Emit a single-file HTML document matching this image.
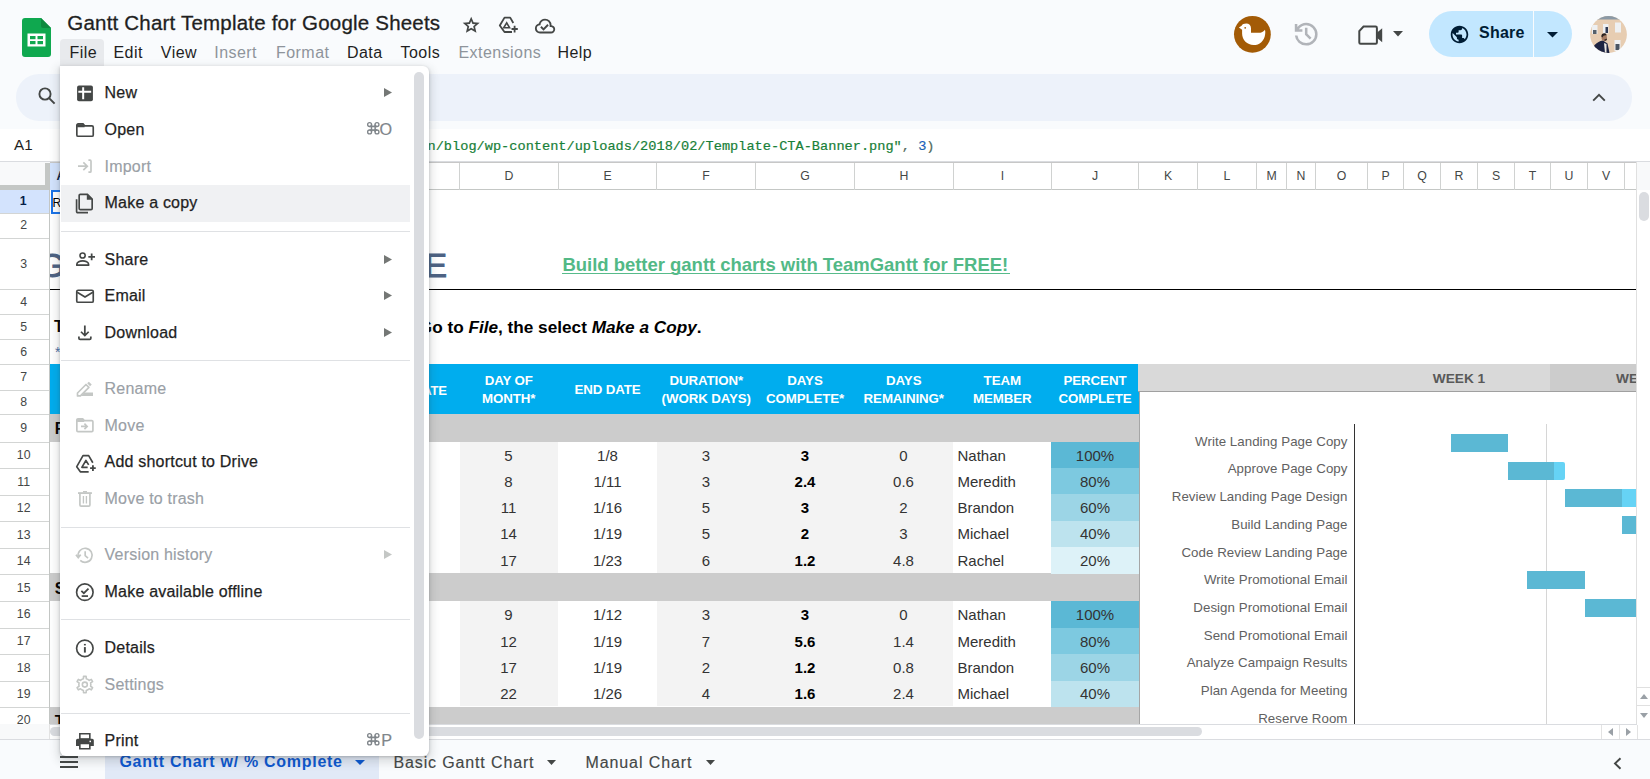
<!DOCTYPE html><html><head><meta charset="utf-8"><style>
*{box-sizing:border-box}
html,body{margin:0;padding:0}
body{width:1650px;height:779px;overflow:hidden;position:relative;background:#f9fbfd;font-family:'Liberation Sans',sans-serif;}
.a{position:absolute}
.t{white-space:nowrap}
svg{position:absolute;overflow:visible}
</style></head><body>
<svg style="left:22px;top:18px" width="29" height="39" viewBox="0 0 29 39">
<path d="M3 0H19L29 10V36a3 3 0 0 1-3 3H3a3 3 0 0 1-3-3V3a3 3 0 0 1 3-3z" fill="#0fa84f"/>
<path d="M19 0L29 10H21a2 2 0 0 1-2-2z" fill="#0c8a3e"/>
<rect x="5.5" y="15.5" width="18" height="13" fill="#fff"/>
<rect x="8" y="18" width="5.5" height="3.2" fill="#0fa84f"/><rect x="15.5" y="18" width="5.5" height="3.2" fill="#0fa84f"/>
<rect x="8" y="23" width="5.5" height="3.2" fill="#0fa84f"/><rect x="15.5" y="23" width="5.5" height="3.2" fill="#0fa84f"/>
</svg>
<div class="a t" style="left:67.3px;top:13.45px;font-size:20.5px;line-height:20.5px;color:#1f1f1f;letter-spacing:0.2px;-webkit-text-stroke:0.3px #1f1f1f;">Gantt Chart Template for Google Sheets</div>
<svg style="left:461.3px;top:14.7px" width="20.4" height="20.4" viewBox="0 -960 960 960"><path d="m354-287 126-76 126 77-33-144 111-96-146-13-58-136-58 135-146 13 111 97-33 143ZM233-120l65-281L80-590l288-25 112-265 112 265 288 25-218 189 65 281-247-149-247 149Z" fill="#444746"/></svg>
<svg style="left:498px;top:16px" width="22" height="19" viewBox="0 0 22 19"><path d="M14 16H6.5L1.8 9.5L6.5 1.6H12.2L15.3 7" fill="none" stroke="#444746" stroke-width="1.8" stroke-linejoin="round"/><path d="M5.7 11.8H11.6L8.7 6.8Z" fill="none" stroke="#444746" stroke-width="1.6"/><path d="M13.5 13H19.8M16.6 9.8V16.6" stroke="#444746" stroke-width="1.8"/></svg>
<svg style="left:533.8px;top:14.5px" width="22.1" height="22.1" viewBox="0 -960 960 960"><path d="m414-280 226-226-58-58-169 169-84-84-57 57 142 142ZM260-160q-91 0-155.5-63T40-377q0-78 47-139t123-78q25-92 100-149t170-57q117 0 198.5 81.5T760-520q69 8 114.5 59.5T920-340q0 75-52.5 127.5T740-160H260Zm0-80h480q42 0 71-29t29-71q0-42-29-71t-71-29h-60v-80q0-83-58.5-141.5T480-720q-83 0-141.5 58.5T280-520h-20q-58 0-99 41t-41 99q0 58 41 99t99 41Z" fill="#444746"/></svg>
<div class="a" style="left:60px;top:39px;width:44px;height:28px;background:#e8eaed;border-radius:4px 4px 0 0;"></div>
<div class="a t" style="left:69.5px;top:44.96px;font-size:16px;line-height:16px;color:#1f1f1f;letter-spacing:0.45px;">File</div>
<div class="a t" style="left:113.5px;top:44.96px;font-size:16px;line-height:16px;color:#1f1f1f;letter-spacing:0.45px;">Edit</div>
<div class="a t" style="left:160.8px;top:44.96px;font-size:16px;line-height:16px;color:#1f1f1f;letter-spacing:0.45px;">View</div>
<div class="a t" style="left:214.3px;top:44.96px;font-size:16px;line-height:16px;color:#8e949b;letter-spacing:0.45px;">Insert</div>
<div class="a t" style="left:276px;top:44.96px;font-size:16px;line-height:16px;color:#8e949b;letter-spacing:0.45px;">Format</div>
<div class="a t" style="left:347px;top:44.96px;font-size:16px;line-height:16px;color:#1f1f1f;letter-spacing:0.45px;">Data</div>
<div class="a t" style="left:400.5px;top:44.96px;font-size:16px;line-height:16px;color:#1f1f1f;letter-spacing:0.45px;">Tools</div>
<div class="a t" style="left:458.5px;top:44.96px;font-size:16px;line-height:16px;color:#8e949b;letter-spacing:0.45px;">Extensions</div>
<div class="a t" style="left:557.5px;top:44.96px;font-size:16px;line-height:16px;color:#1f1f1f;letter-spacing:0.45px;">Help</div>
<svg style="left:1234px;top:16px" width="37" height="37" viewBox="0 0 37 37"><circle cx="18.4" cy="18.3" r="18.4" fill="#a35b06"/>
<path d="M8.1 13.7L4.9 11.6L7.6 9.8C8.2 8.2 10 7.5 12.3 7.5C15 7.5 17 9.5 17 12.2V16.7H26.4C28.5 16.2 30 15 30.9 13.7C31.5 15.5 31.3 17 31.1 18.4C30.5 24.5 25.5 29.1 19.6 29.1C13.2 29.1 8.1 24 8.1 17.6Z" fill="#fff"/><circle cx="11.2" cy="11.8" r=".9" fill="#a35b06"/></svg>
<svg style="left:1290.9px;top:18.9px" width="30.4" height="30.4" viewBox="0 -960 960 960"><path d="M480-120q-138 0-240.5-91.5T122-440h82q14 104 92.5 172T480-200q117 0 198.5-81.5T760-480q0-117-81.5-198.5T480-760q-69 0-129 32t-101 88h110v80H120v-240h80v94q51-64 124.5-99T480-840q75 0 140.5 28.5t114 77q48.5 48.5 77 114T840-480q0 75-28.5 140.5t-77 114q-48.5 48.5-114 77T480-120Zm112-192L440-464v-216h80v184l128 128-56 56Z" fill="#b1b4b9"/></svg>
<svg style="left:1358px;top:25px" width="26" height="20" viewBox="0 0 26 20"><path d="M5.5 1.6H17.6a1.3 1.3 0 0 1 1.3 1.3V17.4a1.3 1.3 0 0 1-1.3 1.3H2.6a1.3 1.3 0 0 1-1.3-1.3V6.2z" fill="none" stroke="#444746" stroke-width="2"/><path d="M18.6 8L24.2 3.2V17.2L18.6 12.4z" fill="#444746"/></svg>
<svg style="left:1393px;top:31px" width="10" height="6" viewBox="0 0 10 6"><path d="M0 0H10L5 5.5z" fill="#444746"/></svg>
<div class="a" style="left:1429px;top:11px;width:143px;height:46px;background:#c2e7ff;border-radius:23px;"></div>
<div class="a" style="left:1533px;top:11px;width:1.2px;height:46px;background:#f9fbfd;"></div>
<svg style="left:1449px;top:24px" width="21" height="21" viewBox="0 0 24 24"><path d="M12 2C6.48 2 2 6.48 2 12s4.48 10 10 10 10-4.48 10-10S17.52 2 12 2zm-1 17.93c-3.95-.49-7-3.85-7-7.93 0-.62.08-1.21.21-1.79L9 15v1c0 1.1.9 2 2 2v1.93zm6.9-2.54c-.26-.81-1-1.39-1.9-1.39h-1v-3c0-.55-.45-1-1-1H8v-2h2c.55 0 1-.45 1-1V7h2c1.1 0 2-.9 2-2v-.41c2.93 1.19 5 4.06 5 7.41 0 2.08-.8 3.97-2.1 5.39z" fill="#001d35"/></svg>
<div class="a t" style="left:1479px;top:25.46px;font-size:16px;line-height:16px;color:#001d35;letter-spacing:0.25px;font-weight:bold;">Share</div>
<svg style="left:1547px;top:32px" width="11" height="6" viewBox="0 0 11 6"><path d="M0 0H11L5.5 5.5z" fill="#001d35"/></svg>
<svg style="left:1590px;top:15.5px" width="37" height="37" viewBox="0 0 37 37"><defs><clipPath id="cav"><circle cx="18.5" cy="18.5" r="18.4"/></clipPath></defs><g clip-path="url(#cav)">
<rect width="37" height="37" fill="#e7cdb2"/><rect x="0" y="0" width="37" height="3.5" fill="#8c9aa6"/>
<rect x="2" y="9" width="5.5" height="9" fill="#eef0f2"/><rect x="3" y="14" width="3.5" height="4" fill="#55606a"/>
<rect x="13" y="8" width="5.5" height="9.5" fill="#eef0f2"/><rect x="15.5" y="11" width="2.5" height="6" fill="#2e3a55"/>
<rect x="25" y="6.5" width="6" height="10" fill="#eef0f2"/>
<rect x="24.5" y="24" width="6" height="11" fill="#eef0f2"/><rect x="25.5" y="28" width="4" height="6" fill="#4a5563"/>
<path d="M2.5 37L3.5 30.5C5 28 8 26 10.5 25L13 24.5L17.5 27.5L19.5 37Z" fill="#1d2442"/>
<path d="M14 27L16.5 28V37H15z" fill="#e9e6e2"/>
<ellipse cx="14.2" cy="21.6" rx="2.7" ry="3.4" fill="#a57b62"/><path d="M11.3 20.5C11.3 18 13 17 14.5 17.2C16.2 17.4 16.8 18.6 16.5 19.5C15 19 13 19.5 12.5 21.5Z" fill="#2a2220"/><path d="M14 24.3C15 25.2 16.5 24.8 17 23.5L16.8 22.6L14.5 23.4Z" fill="#3b2f2a"/></g></svg>
<div class="a" style="left:16px;top:74px;width:1616px;height:46.5px;background:#edf2fa;border-radius:23px;"></div>
<svg style="left:37px;top:86px" width="20" height="20" viewBox="0 0 20 20"><circle cx="8" cy="8" r="5.6" fill="none" stroke="#444746" stroke-width="1.9"/><path d="M12.1 12.1L17.6 17.6" stroke="#444746" stroke-width="2"/></svg>
<svg style="left:1592px;top:93px" width="14" height="9" viewBox="0 0 14 9"><path d="M1.2 7.6L7 1.8L12.8 7.6" fill="none" stroke="#444746" stroke-width="1.9"/></svg>
<div class="a" style="left:0px;top:129px;width:1650px;height:33px;background:#ffffff;"></div>
<div class="a" style="left:0px;top:161px;width:1650px;height:1px;background:#dadce0;"></div>
<div class="a t" style="left:14px;top:137.13px;font-size:15.2px;line-height:15.2px;color:#1f1f1f;">A1</div>
<div class="a t" style="left:427.5px;top:139.58px;font-family:'Liberation Mono',monospace;font-size:13.6px;line-height:13.6px;color:#188038;letter-spacing:0.02px;-webkit-text-stroke:0.2px #188038">n/blog/wp-content/uploads/2018/02/Template-CTA-Banner.png"<span style="color:#5f6368">, </span><span style="color:#1a56db">3</span><span style="color:#5f6368">)</span></div>
<div class="a" style="left:0px;top:162px;width:1650px;height:577px;background:#ffffff;"></div>
<div class="a" style="left:0px;top:162px;width:1650px;height:1px;background:#c7c7c7;"></div>
<div class="a" style="left:0px;top:189px;width:1637px;height:1.3px;background:#c4c7c5;"></div>
<div class="a" style="left:459px;top:163px;width:1px;height:27px;background:#d0d2d1;"></div>
<div class="a" style="left:558px;top:163px;width:1px;height:27px;background:#d0d2d1;"></div>
<div class="a" style="left:656px;top:163px;width:1px;height:27px;background:#d0d2d1;"></div>
<div class="a" style="left:755px;top:163px;width:1px;height:27px;background:#d0d2d1;"></div>
<div class="a" style="left:854px;top:163px;width:1px;height:27px;background:#d0d2d1;"></div>
<div class="a" style="left:953px;top:163px;width:1px;height:27px;background:#d0d2d1;"></div>
<div class="a" style="left:1051px;top:163px;width:1px;height:27px;background:#d0d2d1;"></div>
<div class="a" style="left:1138px;top:163px;width:1px;height:27px;background:#d0d2d1;"></div>
<div class="a" style="left:1197px;top:163px;width:1px;height:27px;background:#d0d2d1;"></div>
<div class="a" style="left:1256px;top:163px;width:1px;height:27px;background:#d0d2d1;"></div>
<div class="a" style="left:1286px;top:163px;width:1px;height:27px;background:#d0d2d1;"></div>
<div class="a" style="left:1315px;top:163px;width:1px;height:27px;background:#d0d2d1;"></div>
<div class="a" style="left:1367px;top:163px;width:1px;height:27px;background:#d0d2d1;"></div>
<div class="a" style="left:1403px;top:163px;width:1px;height:27px;background:#d0d2d1;"></div>
<div class="a" style="left:1440px;top:163px;width:1px;height:27px;background:#d0d2d1;"></div>
<div class="a" style="left:1477px;top:163px;width:1px;height:27px;background:#d0d2d1;"></div>
<div class="a" style="left:1514px;top:163px;width:1px;height:27px;background:#d0d2d1;"></div>
<div class="a" style="left:1550px;top:163px;width:1px;height:27px;background:#d0d2d1;"></div>
<div class="a" style="left:1587px;top:163px;width:1px;height:27px;background:#d0d2d1;"></div>
<div class="a" style="left:1624px;top:163px;width:1px;height:27px;background:#d0d2d1;"></div>
<div class="a t" style="left:209.0px;width:600px;text-align:center;top:170.09px;font-size:12.3px;line-height:12.3px;color:#444746;">D</div>
<div class="a t" style="left:307.5px;width:600px;text-align:center;top:170.09px;font-size:12.3px;line-height:12.3px;color:#444746;">E</div>
<div class="a t" style="left:406.0px;width:600px;text-align:center;top:170.09px;font-size:12.3px;line-height:12.3px;color:#444746;">F</div>
<div class="a t" style="left:505.0px;width:600px;text-align:center;top:170.09px;font-size:12.3px;line-height:12.3px;color:#444746;">G</div>
<div class="a t" style="left:604.0px;width:600px;text-align:center;top:170.09px;font-size:12.3px;line-height:12.3px;color:#444746;">H</div>
<div class="a t" style="left:702.5px;width:600px;text-align:center;top:170.09px;font-size:12.3px;line-height:12.3px;color:#444746;">I</div>
<div class="a t" style="left:795.0px;width:600px;text-align:center;top:170.09px;font-size:12.3px;line-height:12.3px;color:#444746;">J</div>
<div class="a t" style="left:868.0px;width:600px;text-align:center;top:170.09px;font-size:12.3px;line-height:12.3px;color:#444746;">K</div>
<div class="a t" style="left:927.0px;width:600px;text-align:center;top:170.09px;font-size:12.3px;line-height:12.3px;color:#444746;">L</div>
<div class="a t" style="left:971.5px;width:600px;text-align:center;top:170.09px;font-size:12.3px;line-height:12.3px;color:#444746;">M</div>
<div class="a t" style="left:1001.0px;width:600px;text-align:center;top:170.09px;font-size:12.3px;line-height:12.3px;color:#444746;">N</div>
<div class="a t" style="left:1041.5px;width:600px;text-align:center;top:170.09px;font-size:12.3px;line-height:12.3px;color:#444746;">O</div>
<div class="a t" style="left:1085.5px;width:600px;text-align:center;top:170.09px;font-size:12.3px;line-height:12.3px;color:#444746;">P</div>
<div class="a t" style="left:1122.0px;width:600px;text-align:center;top:170.09px;font-size:12.3px;line-height:12.3px;color:#444746;">Q</div>
<div class="a t" style="left:1159.0px;width:600px;text-align:center;top:170.09px;font-size:12.3px;line-height:12.3px;color:#444746;">R</div>
<div class="a t" style="left:1196.0px;width:600px;text-align:center;top:170.09px;font-size:12.3px;line-height:12.3px;color:#444746;">S</div>
<div class="a t" style="left:1232.5px;width:600px;text-align:center;top:170.09px;font-size:12.3px;line-height:12.3px;color:#444746;">T</div>
<div class="a t" style="left:1269.0px;width:600px;text-align:center;top:170.09px;font-size:12.3px;line-height:12.3px;color:#444746;">U</div>
<div class="a t" style="left:1306.0px;width:600px;text-align:center;top:170.09px;font-size:12.3px;line-height:12.3px;color:#444746;">V</div>
<div class="a t" style="left:1343.0px;width:600px;text-align:center;top:170.09px;font-size:12.3px;line-height:12.3px;color:#444746;">W</div>
<div class="a" style="left:0px;top:162px;width:50px;height:28px;background:#f8f9fa;"></div>
<div class="a" style="left:45px;top:163px;width:5px;height:27px;background:#c4c7c5;"></div>
<div class="a" style="left:0px;top:185px;width:50px;height:5px;background:#c4c7c5;"></div>
<div class="a" style="left:50px;top:163px;width:12px;height:26.5px;background:#d3e3fd;"></div>
<div class="a t" style="left:56.5px;top:170.09px;font-size:12.3px;line-height:12.3px;color:#041e49;font-weight:bold;">A</div>
<div class="a" style="left:0px;top:190px;width:49.5px;height:534px;background:#ffffff;"></div>
<div class="a" style="left:0px;top:190px;width:50px;height:23px;background:#d3e3fd;"></div>
<div class="a" style="left:0px;top:212.5px;width:49px;height:1px;background:#d3d5d4;"></div>
<div class="a" style="left:0px;top:237.5px;width:49px;height:1px;background:#d3d5d4;"></div>
<div class="a" style="left:0px;top:289.0px;width:49px;height:1px;background:#d3d5d4;"></div>
<div class="a" style="left:0px;top:313.5px;width:49px;height:1px;background:#d3d5d4;"></div>
<div class="a" style="left:0px;top:339.0px;width:49px;height:1px;background:#d3d5d4;"></div>
<div class="a" style="left:0px;top:363.5px;width:49px;height:1px;background:#d3d5d4;"></div>
<div class="a" style="left:0px;top:389.5px;width:49px;height:1px;background:#d3d5d4;"></div>
<div class="a" style="left:0px;top:414.0px;width:49px;height:1px;background:#d3d5d4;"></div>
<div class="a" style="left:0px;top:441.5px;width:49px;height:1px;background:#d3d5d4;"></div>
<div class="a" style="left:0px;top:468.0px;width:49px;height:1px;background:#d3d5d4;"></div>
<div class="a" style="left:0px;top:494.5px;width:49px;height:1px;background:#d3d5d4;"></div>
<div class="a" style="left:0px;top:521.0px;width:49px;height:1px;background:#d3d5d4;"></div>
<div class="a" style="left:0px;top:547.5px;width:49px;height:1px;background:#d3d5d4;"></div>
<div class="a" style="left:0px;top:574.0px;width:49px;height:1px;background:#d3d5d4;"></div>
<div class="a" style="left:0px;top:600.5px;width:49px;height:1px;background:#d3d5d4;"></div>
<div class="a" style="left:0px;top:627.5px;width:49px;height:1px;background:#d3d5d4;"></div>
<div class="a" style="left:0px;top:654.0px;width:49px;height:1px;background:#d3d5d4;"></div>
<div class="a" style="left:0px;top:680.5px;width:49px;height:1px;background:#d3d5d4;"></div>
<div class="a" style="left:0px;top:706.5px;width:49px;height:1px;background:#d3d5d4;"></div>
<div class="a" style="left:48.5px;top:190px;width:1.5px;height:534px;background:#c4c7c5;"></div>
<div class="a t" style="left:-276.8px;width:600px;text-align:center;top:195.49px;font-size:12.3px;line-height:12.3px;color:#041e49;font-weight:bold;">1</div>
<div class="a t" style="left:-276.3px;width:600px;text-align:center;top:219.49px;font-size:12.3px;line-height:12.3px;color:#444746;">2</div>
<div class="a t" style="left:-276.3px;width:600px;text-align:center;top:257.74px;font-size:12.3px;line-height:12.3px;color:#444746;">3</div>
<div class="a t" style="left:-276.3px;width:600px;text-align:center;top:295.74px;font-size:12.3px;line-height:12.3px;color:#444746;">4</div>
<div class="a t" style="left:-276.3px;width:600px;text-align:center;top:320.74px;font-size:12.3px;line-height:12.3px;color:#444746;">5</div>
<div class="a t" style="left:-276.3px;width:600px;text-align:center;top:345.74px;font-size:12.3px;line-height:12.3px;color:#444746;">6</div>
<div class="a t" style="left:-276.3px;width:600px;text-align:center;top:370.99px;font-size:12.3px;line-height:12.3px;color:#444746;">7</div>
<div class="a t" style="left:-276.3px;width:600px;text-align:center;top:396.24px;font-size:12.3px;line-height:12.3px;color:#444746;">8</div>
<div class="a t" style="left:-276.3px;width:600px;text-align:center;top:422.24px;font-size:12.3px;line-height:12.3px;color:#444746;">9</div>
<div class="a t" style="left:-276.3px;width:600px;text-align:center;top:449.24px;font-size:12.3px;line-height:12.3px;color:#444746;">10</div>
<div class="a t" style="left:-276.3px;width:600px;text-align:center;top:475.74px;font-size:12.3px;line-height:12.3px;color:#444746;">11</div>
<div class="a t" style="left:-276.3px;width:600px;text-align:center;top:502.24px;font-size:12.3px;line-height:12.3px;color:#444746;">12</div>
<div class="a t" style="left:-276.3px;width:600px;text-align:center;top:528.74px;font-size:12.3px;line-height:12.3px;color:#444746;">13</div>
<div class="a t" style="left:-276.3px;width:600px;text-align:center;top:555.24px;font-size:12.3px;line-height:12.3px;color:#444746;">14</div>
<div class="a t" style="left:-276.3px;width:600px;text-align:center;top:581.74px;font-size:12.3px;line-height:12.3px;color:#444746;">15</div>
<div class="a t" style="left:-276.3px;width:600px;text-align:center;top:608.49px;font-size:12.3px;line-height:12.3px;color:#444746;">16</div>
<div class="a t" style="left:-276.3px;width:600px;text-align:center;top:635.24px;font-size:12.3px;line-height:12.3px;color:#444746;">17</div>
<div class="a t" style="left:-276.3px;width:600px;text-align:center;top:661.74px;font-size:12.3px;line-height:12.3px;color:#444746;">18</div>
<div class="a t" style="left:-276.3px;width:600px;text-align:center;top:687.99px;font-size:12.3px;line-height:12.3px;color:#444746;">19</div>
<div class="a t" style="left:-276.3px;width:600px;text-align:center;top:713.99px;font-size:12.3px;line-height:12.3px;color:#444746;">20</div>
<div class="a" style="left:50.5px;top:190.3px;width:30px;height:23.5px;border:2px solid #1a73e8"></div>
<div class="a t" style="left:52.5px;top:197.04px;font-size:12px;line-height:12px;color:#000;">R</div>
<div class="a" style="left:50px;top:238px;width:500px;height:51px;overflow:hidden">
<div class="a t" style="right:103.5px;top:11.04px;font-size:33.5px;line-height:33.5px;color:#4d6283;letter-spacing:-0.6px;-webkit-text-stroke:0.9px #4d6283">GANTT CHART TEMPLATE</div>
</div>
<div class="a t" style="left:562.4px;top:255.94px;font-size:18.5px;line-height:18.5px;color:#52b986;letter-spacing:-0.02px;font-weight:bold;">Build better gantt charts with TeamGantt for FREE!</div>
<div class="a" style="left:562px;top:272.8px;width:448px;height:1.4px;background:#57bb8a;"></div>
<div class="a" style="left:50px;top:288.7px;width:1600px;height:1.6px;background:#000;"></div>
<div class="a t" style="left:54px;top:318.86px;font-size:16px;line-height:16px;color:#000;font-weight:bold;">T</div>
<div class="a" style="left:61px;top:310px;width:700px;height:30px;overflow:hidden">
<div class="a t" style="right:59.5px;top:9.24px;font-size:17.2px;line-height:17.2px;font-weight:bold;color:#000;text-align:right">To make a copy of this Gantt chart template: Go to <i>File</i>, the select <i>Make a Copy</i>.</div>
</div>
<div class="a t" style="left:55px;top:345.15px;font-size:14px;line-height:14px;color:#4a6fa5;">*</div>
<div class="a" style="left:50px;top:364px;width:1089px;height:50px;background:#00adee;"></div>
<div class="a t" style="right:1203.2px;text-align:right;top:383.51px;font-size:13.1px;line-height:13.1px;color:#fff;letter-spacing:-0.25px;font-weight:bold;">START DATE</div>
<div class="a t" style="left:459.5px;width:98.5px;text-align:center;top:372.44px;font-size:13.3px;line-height:18px;font-weight:bold;color:#fff;letter-spacing:-0.1px">DAY OF<br>MONTH*</div>
<div class="a t" style="left:558px;width:99px;text-align:center;top:381.14px;font-size:13.3px;line-height:18px;font-weight:bold;color:#fff;letter-spacing:-0.1px">END DATE</div>
<div class="a t" style="left:657px;width:98.5px;text-align:center;top:372.44px;font-size:13.3px;line-height:18px;font-weight:bold;color:#fff;letter-spacing:-0.1px">DURATION*<br>(WORK DAYS)</div>
<div class="a t" style="left:755.5px;width:99.0px;text-align:center;top:372.44px;font-size:13.3px;line-height:18px;font-weight:bold;color:#fff;letter-spacing:-0.1px">DAYS<br>COMPLETE*</div>
<div class="a t" style="left:854.5px;width:98.5px;text-align:center;top:372.44px;font-size:13.3px;line-height:18px;font-weight:bold;color:#fff;letter-spacing:-0.1px">DAYS<br>REMAINING*</div>
<div class="a t" style="left:953px;width:98.5px;text-align:center;top:372.44px;font-size:13.3px;line-height:18px;font-weight:bold;color:#fff;letter-spacing:-0.1px">TEAM<br>MEMBER</div>
<div class="a t" style="left:1051.5px;width:87.0px;text-align:center;top:372.44px;font-size:13.3px;line-height:18px;font-weight:bold;color:#fff;letter-spacing:-0.1px">PERCENT<br>COMPLETE</div>
<div class="a" style="left:50px;top:414px;width:1089px;height:28px;background:#cccccc;"></div>
<div class="a" style="left:50px;top:573.4px;width:1089px;height:28.0px;background:#cccccc;"></div>
<div class="a" style="left:50px;top:706.5px;width:1089px;height:17.5px;background:#cccccc;"></div>
<div class="a t" style="left:54.8px;top:421.36px;font-size:16px;line-height:16px;color:#000;font-weight:bold;">FIRST PHASE</div>
<div class="a t" style="left:54.8px;top:580.96px;font-size:16px;line-height:16px;color:#000;font-weight:bold;">SECOND PHASE</div>
<div class="a t" style="left:54.8px;top:713.96px;font-size:16px;line-height:16px;color:#000;font-weight:bold;">THIRD PHASE</div>
<div class="a" style="left:50px;top:442px;width:1089px;height:131.39999999999998px;background:#ffffff;"></div>
<div class="a" style="left:459.5px;top:442px;width:98.5px;height:131.39999999999998px;background:#f3f3f3;"></div>
<div class="a" style="left:657px;top:442px;width:296px;height:131.39999999999998px;background:#f3f3f3;"></div>
<div class="a" style="left:1051.2px;top:442px;width:87.8px;height:26.6px;background:#5bb8d5;"></div>
<div class="a t" style="left:208.5px;width:600px;text-align:center;top:447.50px;font-size:15px;line-height:15px;color:#333;">5</div>
<div class="a t" style="left:307.5px;width:600px;text-align:center;top:447.50px;font-size:15px;line-height:15px;color:#333;">1/8</div>
<div class="a t" style="left:406px;width:600px;text-align:center;top:447.50px;font-size:15px;line-height:15px;color:#333;">3</div>
<div class="a t" style="left:505px;width:600px;text-align:center;top:447.50px;font-size:15px;line-height:15px;color:#000;font-weight:bold;">3</div>
<div class="a t" style="left:603.5px;width:600px;text-align:center;top:447.50px;font-size:15px;line-height:15px;color:#333;">0</div>
<div class="a t" style="left:957.5px;top:447.50px;font-size:15px;line-height:15px;color:#333;">Nathan</div>
<div class="a t" style="left:795px;width:600px;text-align:center;top:447.50px;font-size:15px;line-height:15px;color:#333;">100%</div>
<div class="a" style="left:1051.2px;top:468px;width:87.8px;height:26.900000000000013px;background:#7dc9e0;"></div>
<div class="a t" style="left:208.5px;width:600px;text-align:center;top:473.65px;font-size:15px;line-height:15px;color:#333;">8</div>
<div class="a t" style="left:307.5px;width:600px;text-align:center;top:473.65px;font-size:15px;line-height:15px;color:#333;">1/11</div>
<div class="a t" style="left:406px;width:600px;text-align:center;top:473.65px;font-size:15px;line-height:15px;color:#333;">3</div>
<div class="a t" style="left:505px;width:600px;text-align:center;top:473.65px;font-size:15px;line-height:15px;color:#000;font-weight:bold;">2.4</div>
<div class="a t" style="left:603.5px;width:600px;text-align:center;top:473.65px;font-size:15px;line-height:15px;color:#333;">0.6</div>
<div class="a t" style="left:957.5px;top:473.65px;font-size:15px;line-height:15px;color:#333;">Meredith</div>
<div class="a t" style="left:795px;width:600px;text-align:center;top:473.65px;font-size:15px;line-height:15px;color:#333;">80%</div>
<div class="a" style="left:1051.2px;top:494.3px;width:87.8px;height:26.79999999999999px;background:#9cd5e6;"></div>
<div class="a t" style="left:208.5px;width:600px;text-align:center;top:499.90px;font-size:15px;line-height:15px;color:#333;">11</div>
<div class="a t" style="left:307.5px;width:600px;text-align:center;top:499.90px;font-size:15px;line-height:15px;color:#333;">1/16</div>
<div class="a t" style="left:406px;width:600px;text-align:center;top:499.90px;font-size:15px;line-height:15px;color:#333;">5</div>
<div class="a t" style="left:505px;width:600px;text-align:center;top:499.90px;font-size:15px;line-height:15px;color:#000;font-weight:bold;">3</div>
<div class="a t" style="left:603.5px;width:600px;text-align:center;top:499.90px;font-size:15px;line-height:15px;color:#333;">2</div>
<div class="a t" style="left:957.5px;top:499.90px;font-size:15px;line-height:15px;color:#333;">Brandon</div>
<div class="a t" style="left:795px;width:600px;text-align:center;top:499.90px;font-size:15px;line-height:15px;color:#333;">60%</div>
<div class="a" style="left:1051.2px;top:520.5px;width:87.8px;height:26.899999999999956px;background:#bde3ee;"></div>
<div class="a t" style="left:208.5px;width:600px;text-align:center;top:526.15px;font-size:15px;line-height:15px;color:#333;">14</div>
<div class="a t" style="left:307.5px;width:600px;text-align:center;top:526.15px;font-size:15px;line-height:15px;color:#333;">1/19</div>
<div class="a t" style="left:406px;width:600px;text-align:center;top:526.15px;font-size:15px;line-height:15px;color:#333;">5</div>
<div class="a t" style="left:505px;width:600px;text-align:center;top:526.15px;font-size:15px;line-height:15px;color:#000;font-weight:bold;">2</div>
<div class="a t" style="left:603.5px;width:600px;text-align:center;top:526.15px;font-size:15px;line-height:15px;color:#333;">3</div>
<div class="a t" style="left:957.5px;top:526.15px;font-size:15px;line-height:15px;color:#333;">Michael</div>
<div class="a t" style="left:795px;width:600px;text-align:center;top:526.15px;font-size:15px;line-height:15px;color:#333;">40%</div>
<div class="a" style="left:1051.2px;top:546.8px;width:87.8px;height:27.200000000000024px;background:#ddf2f8;"></div>
<div class="a t" style="left:208.5px;width:600px;text-align:center;top:552.60px;font-size:15px;line-height:15px;color:#333;">17</div>
<div class="a t" style="left:307.5px;width:600px;text-align:center;top:552.60px;font-size:15px;line-height:15px;color:#333;">1/23</div>
<div class="a t" style="left:406px;width:600px;text-align:center;top:552.60px;font-size:15px;line-height:15px;color:#333;">6</div>
<div class="a t" style="left:505px;width:600px;text-align:center;top:552.60px;font-size:15px;line-height:15px;color:#000;font-weight:bold;">1.2</div>
<div class="a t" style="left:603.5px;width:600px;text-align:center;top:552.60px;font-size:15px;line-height:15px;color:#333;">4.8</div>
<div class="a t" style="left:957.5px;top:552.60px;font-size:15px;line-height:15px;color:#333;">Rachel</div>
<div class="a t" style="left:795px;width:600px;text-align:center;top:552.60px;font-size:15px;line-height:15px;color:#333;">20%</div>
<div class="a" style="left:50px;top:601.4px;width:1089px;height:105.10000000000002px;background:#ffffff;"></div>
<div class="a" style="left:459.5px;top:601.4px;width:98.5px;height:105.10000000000002px;background:#f3f3f3;"></div>
<div class="a" style="left:657px;top:601.4px;width:296px;height:105.10000000000002px;background:#f3f3f3;"></div>
<div class="a" style="left:1051.2px;top:601.4px;width:87.8px;height:27.200000000000024px;background:#5bb8d5;"></div>
<div class="a t" style="left:208.5px;width:600px;text-align:center;top:607.20px;font-size:15px;line-height:15px;color:#333;">9</div>
<div class="a t" style="left:307.5px;width:600px;text-align:center;top:607.20px;font-size:15px;line-height:15px;color:#333;">1/12</div>
<div class="a t" style="left:406px;width:600px;text-align:center;top:607.20px;font-size:15px;line-height:15px;color:#333;">3</div>
<div class="a t" style="left:505px;width:600px;text-align:center;top:607.20px;font-size:15px;line-height:15px;color:#000;font-weight:bold;">3</div>
<div class="a t" style="left:603.5px;width:600px;text-align:center;top:607.20px;font-size:15px;line-height:15px;color:#333;">0</div>
<div class="a t" style="left:957.5px;top:607.20px;font-size:15px;line-height:15px;color:#333;">Nathan</div>
<div class="a t" style="left:795px;width:600px;text-align:center;top:607.20px;font-size:15px;line-height:15px;color:#333;">100%</div>
<div class="a" style="left:1051.2px;top:628px;width:87.8px;height:26.6px;background:#7dc9e0;"></div>
<div class="a t" style="left:208.5px;width:600px;text-align:center;top:633.50px;font-size:15px;line-height:15px;color:#333;">12</div>
<div class="a t" style="left:307.5px;width:600px;text-align:center;top:633.50px;font-size:15px;line-height:15px;color:#333;">1/19</div>
<div class="a t" style="left:406px;width:600px;text-align:center;top:633.50px;font-size:15px;line-height:15px;color:#333;">7</div>
<div class="a t" style="left:505px;width:600px;text-align:center;top:633.50px;font-size:15px;line-height:15px;color:#000;font-weight:bold;">5.6</div>
<div class="a t" style="left:603.5px;width:600px;text-align:center;top:633.50px;font-size:15px;line-height:15px;color:#333;">1.4</div>
<div class="a t" style="left:957.5px;top:633.50px;font-size:15px;line-height:15px;color:#333;">Meredith</div>
<div class="a t" style="left:795px;width:600px;text-align:center;top:633.50px;font-size:15px;line-height:15px;color:#333;">80%</div>
<div class="a" style="left:1051.2px;top:654px;width:87.8px;height:27.1px;background:#9cd5e6;"></div>
<div class="a t" style="left:208.5px;width:600px;text-align:center;top:659.75px;font-size:15px;line-height:15px;color:#333;">17</div>
<div class="a t" style="left:307.5px;width:600px;text-align:center;top:659.75px;font-size:15px;line-height:15px;color:#333;">1/19</div>
<div class="a t" style="left:406px;width:600px;text-align:center;top:659.75px;font-size:15px;line-height:15px;color:#333;">2</div>
<div class="a t" style="left:505px;width:600px;text-align:center;top:659.75px;font-size:15px;line-height:15px;color:#000;font-weight:bold;">1.2</div>
<div class="a t" style="left:603.5px;width:600px;text-align:center;top:659.75px;font-size:15px;line-height:15px;color:#333;">0.8</div>
<div class="a t" style="left:957.5px;top:659.75px;font-size:15px;line-height:15px;color:#333;">Brandon</div>
<div class="a t" style="left:795px;width:600px;text-align:center;top:659.75px;font-size:15px;line-height:15px;color:#333;">60%</div>
<div class="a" style="left:1051.2px;top:680.5px;width:87.8px;height:26.6px;background:#bde3ee;"></div>
<div class="a t" style="left:208.5px;width:600px;text-align:center;top:686.00px;font-size:15px;line-height:15px;color:#333;">22</div>
<div class="a t" style="left:307.5px;width:600px;text-align:center;top:686.00px;font-size:15px;line-height:15px;color:#333;">1/26</div>
<div class="a t" style="left:406px;width:600px;text-align:center;top:686.00px;font-size:15px;line-height:15px;color:#333;">4</div>
<div class="a t" style="left:505px;width:600px;text-align:center;top:686.00px;font-size:15px;line-height:15px;color:#000;font-weight:bold;">1.6</div>
<div class="a t" style="left:603.5px;width:600px;text-align:center;top:686.00px;font-size:15px;line-height:15px;color:#333;">2.4</div>
<div class="a t" style="left:957.5px;top:686.00px;font-size:15px;line-height:15px;color:#333;">Michael</div>
<div class="a t" style="left:795px;width:600px;text-align:center;top:686.00px;font-size:15px;line-height:15px;color:#333;">40%</div>
<div class="a" style="left:1138.8px;top:391px;width:1.4px;height:333px;background:#a6a6a6;"></div>
<div class="a" style="left:1138.3px;top:364px;width:412px;height:27px;background:#d9d9d9;"></div>
<div class="a" style="left:1550px;top:364px;width:90px;height:27px;background:#cccccc;"></div>
<div class="a" style="left:1138.3px;top:390.6px;width:500px;height:1.3px;background:#a0a0a0;"></div>
<div class="a t" style="left:1159px;width:600px;text-align:center;top:372.40px;font-size:13.7px;line-height:13.7px;color:#595959;font-weight:bold;">WEEK 1</div>
<div class="a t" style="left:1616px;top:372.40px;font-size:13.7px;line-height:13.7px;color:#595959;font-weight:bold;">WEEK 2</div>
<div class="a t" style="right:302.5px;text-align:right;top:434.74px;font-size:13.3px;line-height:13.3px;color:#616161;letter-spacing:0.05px;">Write Landing Page Copy</div>
<div class="a t" style="right:302.5px;text-align:right;top:462.44px;font-size:13.3px;line-height:13.3px;color:#616161;letter-spacing:0.05px;">Approve Page Copy</div>
<div class="a t" style="right:302.5px;text-align:right;top:490.14px;font-size:13.3px;line-height:13.3px;color:#616161;letter-spacing:0.05px;">Review Landing Page Design</div>
<div class="a t" style="right:302.5px;text-align:right;top:517.84px;font-size:13.3px;line-height:13.3px;color:#616161;letter-spacing:0.05px;">Build Landing Page</div>
<div class="a t" style="right:302.5px;text-align:right;top:545.54px;font-size:13.3px;line-height:13.3px;color:#616161;letter-spacing:0.05px;">Code Review Landing Page</div>
<div class="a t" style="right:302.5px;text-align:right;top:573.24px;font-size:13.3px;line-height:13.3px;color:#616161;letter-spacing:0.05px;">Write Promotional Email</div>
<div class="a t" style="right:302.5px;text-align:right;top:600.94px;font-size:13.3px;line-height:13.3px;color:#616161;letter-spacing:0.05px;">Design Promotional Email</div>
<div class="a t" style="right:302.5px;text-align:right;top:628.64px;font-size:13.3px;line-height:13.3px;color:#616161;letter-spacing:0.05px;">Send Promotional Email</div>
<div class="a t" style="right:302.5px;text-align:right;top:656.34px;font-size:13.3px;line-height:13.3px;color:#616161;letter-spacing:0.05px;">Analyze Campaign Results</div>
<div class="a t" style="right:302.5px;text-align:right;top:684.04px;font-size:13.3px;line-height:13.3px;color:#616161;letter-spacing:0.05px;">Plan Agenda for Meeting</div>
<div class="a t" style="right:302.5px;text-align:right;top:711.74px;font-size:13.3px;line-height:13.3px;color:#616161;letter-spacing:0.05px;">Reserve Room</div>
<div class="a" style="left:1353.7px;top:423.7px;width:1.4px;height:301px;background:#333333;"></div>
<div class="a" style="left:1545.5px;top:423.7px;width:1.2px;height:301px;background:#d6d6d6;"></div>
<div class="a" style="left:1450.5px;top:433.8px;width:57.09999999999991px;height:18px;background:#5bb8d4;"></div>
<div class="a" style="left:1553.9px;top:461.5px;width:11.099999999999909px;height:18px;background:#66d3f5;border-radius:0 2px 2px 0;"></div>
<div class="a" style="left:1507.6px;top:461.5px;width:46.30000000000018px;height:18px;background:#5bb8d4;"></div>
<div class="a" style="left:1622.3px;top:489px;width:17.700000000000045px;height:18px;background:#66d3f5;border-radius:0 2px 2px 0;"></div>
<div class="a" style="left:1565px;top:489px;width:57.299999999999955px;height:18px;background:#5bb8d4;"></div>
<div class="a" style="left:1622.3px;top:516.4px;width:17.700000000000045px;height:18px;background:#5bb8d4;"></div>
<div class="a" style="left:1527px;top:571.4px;width:57.5px;height:18px;background:#5bb8d4;"></div>
<div class="a" style="left:1584.5px;top:598.8px;width:55.5px;height:18px;background:#5bb8d4;"></div>
<div class="a" style="left:1636.5px;top:162px;width:13.5px;height:577px;background:#ffffff;"></div>
<div class="a" style="left:1636.5px;top:162px;width:13.5px;height:28px;background:#f8f9fa;"></div>
<div class="a" style="left:1636px;top:162px;width:1px;height:577px;background:#e0e0e0;"></div>
<div class="a" style="left:1638.8px;top:192px;width:10px;height:29px;background:#dadce0;border-radius:5px;"></div>
<div class="a" style="left:1637px;top:687px;width:13px;height:1px;background:#e0e0e0;"></div>
<div class="a" style="left:1637px;top:705px;width:13px;height:1px;background:#e0e0e0;"></div>
<svg style="left:1640px;top:694px" width="8" height="5" viewBox="0 0 8 5"><path d="M0 5H8L4 0z" fill="#9aa0a6"/></svg>
<svg style="left:1640px;top:713px" width="8" height="5" viewBox="0 0 8 5"><path d="M0 0H8L4 5z" fill="#9aa0a6"/></svg>
<div class="a" style="left:0px;top:724px;width:1650px;height:15px;background:#ffffff;"></div>
<div class="a" style="left:0px;top:724px;width:1637px;height:1px;background:#dadce0;"></div>
<div class="a" style="left:0px;top:724px;width:49px;height:15px;background:#f8f9fa;"></div>
<div class="a" style="left:48.5px;top:724px;width:1.5px;height:15px;background:#e3e3e3;"></div>
<div class="a" style="left:50px;top:726.5px;width:1152px;height:9.5px;background:#dadce0;border-radius:5px;"></div>
<div class="a" style="left:1601px;top:725px;width:1px;height:14px;background:#e3e3e3;"></div>
<div class="a" style="left:1619.4px;top:725px;width:1px;height:14px;background:#e3e3e3;"></div>
<div class="a" style="left:1637px;top:725px;width:1px;height:14px;background:#e3e3e3;"></div>
<svg style="left:1608px;top:728px" width="5" height="8" viewBox="0 0 5 8"><path d="M5 0V8L0 4z" fill="#9aa0a6"/></svg>
<svg style="left:1626px;top:728px" width="5" height="8" viewBox="0 0 5 8"><path d="M0 0V8L5 4z" fill="#9aa0a6"/></svg>
<div class="a" style="left:0px;top:738.5px;width:1650px;height:1.2px;background:#dadce0;"></div>
<div class="a" style="left:0px;top:739.5px;width:1650px;height:40px;background:#f9fbfd;"></div>
<svg style="left:60px;top:756px" width="18" height="12" viewBox="0 0 18 12"><path d="M0 1H18M0 6H18M0 11H18" stroke="#444746" stroke-width="1.9"/></svg>
<div class="a" style="left:105px;top:740px;width:274px;height:39px;background:#e1e9f7;"></div>
<div class="a t" style="left:119.4px;top:753.96px;font-size:16px;line-height:16px;color:#0b57d0;letter-spacing:0.72px;font-weight:bold;">Gantt Chart w/ % Complete</div>
<svg style="left:355px;top:759.5px" width="10" height="5" viewBox="0 0 10 5"><path d="M0 0H10L5 5z" fill="#0b57d0"/></svg>
<div class="a t" style="left:393.5px;top:754.76px;font-size:16px;line-height:16px;color:#444746;letter-spacing:0.86px;-webkit-text-stroke:0.15px #444746;">Basic Gantt Chart</div>
<svg style="left:547px;top:759.5px" width="9" height="5" viewBox="0 0 9 5"><path d="M0 0H9L4.5 5z" fill="#444746"/></svg>
<div class="a t" style="left:585.5px;top:754.76px;font-size:16px;line-height:16px;color:#444746;letter-spacing:0.9px;-webkit-text-stroke:0.15px #444746;">Manual Chart</div>
<svg style="left:706px;top:759.5px" width="9" height="5" viewBox="0 0 9 5"><path d="M0 0H9L4.5 5z" fill="#444746"/></svg>
<svg style="left:1612px;top:757px" width="10" height="13" viewBox="0 0 10 13"><path d="M8.5 1.2L3 6.5L8.5 11.8" fill="none" stroke="#444746" stroke-width="1.9"/></svg>
<div class="a" style="left:60px;top:66px;width:369px;height:689.5px;background:#fff;border-radius:0 6px 6px 6px;box-shadow:0 4px 8px 3px rgba(60,64,67,.15),0 1px 3px rgba(60,64,67,.3)"></div>
<div class="a" style="left:61px;top:185px;width:349px;height:36.5px;background:#f0f1f3;"></div>
<div class="a" style="left:61px;top:230.5px;width:349px;height:1.3px;background:#dfe1e4;"></div>
<div class="a" style="left:61px;top:359.5px;width:349px;height:1.3px;background:#dfe1e4;"></div>
<div class="a" style="left:61px;top:526.5px;width:349px;height:1.3px;background:#dfe1e4;"></div>
<div class="a" style="left:61px;top:619.0px;width:349px;height:1.3px;background:#dfe1e4;"></div>
<div class="a" style="left:61px;top:712.5px;width:349px;height:1.3px;background:#dfe1e4;"></div>
<div class="a" style="left:414px;top:72px;width:9.5px;height:666.5px;background:#dadce0;border-radius:5px;"></div>
<div class="a t" style="left:104.6px;top:85.16px;font-size:16px;line-height:16px;color:#1f1f1f;letter-spacing:0.2px;-webkit-text-stroke:0.25px #1f1f1f;">New</div>
<svg style="left:384px;top:88px" width="8" height="9" viewBox="0 0 8 9"><path d="M0 0L8 4.5L0 9z" fill="#747775"/></svg>
<div class="a t" style="left:104.6px;top:122.16px;font-size:16px;line-height:16px;color:#1f1f1f;letter-spacing:0.2px;-webkit-text-stroke:0.25px #1f1f1f;">Open</div>
<svg style="left:367px;top:122.4px" width="12.6" height="12.6" viewBox="0 0 12.6 12.6"><g fill="none" stroke="#80868b" stroke-width="1.35"><circle cx="2.6" cy="2.6" r="1.95"/><circle cx="10" cy="2.6" r="1.95"/><circle cx="2.6" cy="10" r="1.95"/><circle cx="10" cy="10" r="1.95"/><path d="M4.55 2.6V10M8.05 2.6V10M2.6 4.55H10M2.6 8.05H10"/></g><rect x="4.6" y="4.6" width="3.4" height="3.4" fill="#fff"/><path d="M4.55 4.55H8.05V8.05H4.55Z" fill="none" stroke="#80868b" stroke-width="1.35"/></svg>
<div class="a t" style="right:1258px;text-align:right;top:121.49px;font-size:16.2px;line-height:16.2px;color:#80868b;-webkit-text-stroke:0.2px #80868b;">O</div>
<div class="a t" style="left:104.6px;top:158.66px;font-size:16px;line-height:16px;color:#9aa0a6;letter-spacing:0.2px;-webkit-text-stroke:0.15px #9aa0a6;">Import</div>
<div class="a t" style="left:104.6px;top:195.16px;font-size:16px;line-height:16px;color:#1f1f1f;letter-spacing:0.2px;-webkit-text-stroke:0.25px #1f1f1f;">Make a copy</div>
<div class="a t" style="left:104.6px;top:251.66px;font-size:16px;line-height:16px;color:#1f1f1f;letter-spacing:0.2px;-webkit-text-stroke:0.25px #1f1f1f;">Share</div>
<svg style="left:384px;top:254.5px" width="8" height="9" viewBox="0 0 8 9"><path d="M0 0L8 4.5L0 9z" fill="#747775"/></svg>
<div class="a t" style="left:104.6px;top:288.16px;font-size:16px;line-height:16px;color:#1f1f1f;letter-spacing:0.2px;-webkit-text-stroke:0.25px #1f1f1f;">Email</div>
<svg style="left:384px;top:291px" width="8" height="9" viewBox="0 0 8 9"><path d="M0 0L8 4.5L0 9z" fill="#747775"/></svg>
<div class="a t" style="left:104.6px;top:325.16px;font-size:16px;line-height:16px;color:#1f1f1f;letter-spacing:0.2px;-webkit-text-stroke:0.25px #1f1f1f;">Download</div>
<svg style="left:384px;top:328px" width="8" height="9" viewBox="0 0 8 9"><path d="M0 0L8 4.5L0 9z" fill="#747775"/></svg>
<div class="a t" style="left:104.6px;top:381.46px;font-size:16px;line-height:16px;color:#9aa0a6;letter-spacing:0.2px;-webkit-text-stroke:0.15px #9aa0a6;">Rename</div>
<div class="a t" style="left:104.6px;top:417.66px;font-size:16px;line-height:16px;color:#9aa0a6;letter-spacing:0.2px;-webkit-text-stroke:0.15px #9aa0a6;">Move</div>
<div class="a t" style="left:104.6px;top:454.46px;font-size:16px;line-height:16px;color:#1f1f1f;letter-spacing:0.2px;-webkit-text-stroke:0.25px #1f1f1f;">Add shortcut to Drive</div>
<div class="a t" style="left:104.6px;top:490.66px;font-size:16px;line-height:16px;color:#9aa0a6;letter-spacing:0.2px;-webkit-text-stroke:0.15px #9aa0a6;">Move to trash</div>
<div class="a t" style="left:104.6px;top:547.26px;font-size:16px;line-height:16px;color:#9aa0a6;letter-spacing:0.2px;-webkit-text-stroke:0.15px #9aa0a6;">Version history</div>
<svg style="left:384px;top:550.1px" width="8" height="9" viewBox="0 0 8 9"><path d="M0 0L8 4.5L0 9z" fill="#c4c7c5"/></svg>
<div class="a t" style="left:104.6px;top:584.16px;font-size:16px;line-height:16px;color:#1f1f1f;letter-spacing:0.2px;-webkit-text-stroke:0.25px #1f1f1f;">Make available offline</div>
<div class="a t" style="left:104.6px;top:640.36px;font-size:16px;line-height:16px;color:#1f1f1f;letter-spacing:0.2px;-webkit-text-stroke:0.25px #1f1f1f;">Details</div>
<div class="a t" style="left:104.6px;top:676.76px;font-size:16px;line-height:16px;color:#9aa0a6;letter-spacing:0.2px;-webkit-text-stroke:0.15px #9aa0a6;">Settings</div>
<div class="a t" style="left:104.6px;top:733.16px;font-size:16px;line-height:16px;color:#1f1f1f;letter-spacing:0.2px;-webkit-text-stroke:0.25px #1f1f1f;">Print</div>
<svg style="left:367px;top:733.4px" width="12.6" height="12.6" viewBox="0 0 12.6 12.6"><g fill="none" stroke="#80868b" stroke-width="1.35"><circle cx="2.6" cy="2.6" r="1.95"/><circle cx="10" cy="2.6" r="1.95"/><circle cx="2.6" cy="10" r="1.95"/><circle cx="10" cy="10" r="1.95"/><path d="M4.55 2.6V10M8.05 2.6V10M2.6 4.55H10M2.6 8.05H10"/></g><rect x="4.6" y="4.6" width="3.4" height="3.4" fill="#fff"/><path d="M4.55 4.55H8.05V8.05H4.55Z" fill="none" stroke="#80868b" stroke-width="1.35"/></svg>
<div class="a t" style="right:1258px;text-align:right;top:732.49px;font-size:16.2px;line-height:16.2px;color:#80868b;-webkit-text-stroke:0.2px #80868b;">P</div>
<svg style="left:75px;top:82.5px" width="20" height="20" viewBox="0 0 24 24"><rect x="2.5" y="3" width="19" height="19" rx="2.2" fill="#444746"/><path d="M4 10.4H19.4M9.8 5.2V19.4" stroke="#fff" stroke-width="2.4"/></svg>
<svg style="left:75px;top:119.5px" width="20" height="20" viewBox="0 0 24 24"><path d="M2.2 6.3a1.6 1.6 0 0 1 1.6-1.6H9.6L11.6 7H20.3a1.6 1.6 0 0 1 1.6 1.6V17.9a1.6 1.6 0 0 1-1.6 1.6H3.8a1.6 1.6 0 0 1-1.6-1.6Z" fill="none" stroke="#444746" stroke-width="2"/><path d="M2.5 5H9.5L11.5 7.2V8.8H2.5Z" fill="#444746"/></svg>
<svg style="left:75px;top:156.0px" width="20" height="20" viewBox="0 0 24 24"><path d="M3.6 12.2H15M10 7.6L14.8 12.2L10 17" fill="none" stroke="#c4c7c5" stroke-width="2"/><path d="M16.1 5H18a1.2 1.2 0 0 1 1.2 1.2V18.2a1.2 1.2 0 0 1-1.2 1.2H16.1" fill="none" stroke="#c4c7c5" stroke-width="2"/></svg>
<svg style="left:75px;top:192.5px" width="20" height="20" viewBox="0 0 24 24"><path d="M6.4 1.6H14.9L20.6 7.3V18.6a1.4 1.4 0 0 1-1.4 1.4H6.4a1.4 1.4 0 0 1-1.4-1.4V3a1.4 1.4 0 0 1 1.4-1.4Z" fill="none" stroke="#444746" stroke-width="2"/><path d="M14.2 1.5V8H20.8Z" fill="#444746"/><path d="M1.9 7.6V22.2a1.4 1.4 0 0 0 1.4 1.4H15.6" fill="none" stroke="#444746" stroke-width="2"/></svg>
<svg style="left:75px;top:249.0px" width="20" height="20" viewBox="0 0 24 24"><circle cx="9.1" cy="7.8" r="3.1" fill="none" stroke="#444746" stroke-width="1.9"/><path d="M2.2 19.4V18.2C2.2 15.8 5.8 14.2 9.2 14.2S16.3 15.8 16.3 18.2V19.4Z" fill="none" stroke="#444746" stroke-width="2" stroke-linejoin="round"/><path d="M20 5.4V13.4M16 9.4H24" stroke="#444746" stroke-width="2.1"/></svg>
<svg style="left:75px;top:285.5px" width="20" height="20" viewBox="0 0 24 24"><rect x="2.1" y="5.1" width="19.8" height="14.4" rx="1.6" fill="none" stroke="#444746" stroke-width="2"/><path d="M2.6 7.4L12 13.2L21.4 7.4" fill="none" stroke="#444746" stroke-width="2"/></svg>
<svg style="left:75px;top:322.5px" width="20" height="20" viewBox="0 0 24 24"><path d="M11.8 3V15M7.2 10.5L11.8 15.1L16.4 10.5" fill="none" stroke="#444746" stroke-width="2.1"/><path d="M4.7 16.3V18.2a1.4 1.4 0 0 0 1.4 1.4H17.6a1.4 1.4 0 0 0 1.4-1.4V16.3" fill="none" stroke="#444746" stroke-width="2.1"/></svg>
<svg style="left:75px;top:378.8px" width="20" height="20" viewBox="0 0 24 24"><path d="M3 20.3V16.8L13.2 6.6L16.7 10.1L6.5 20.3Z" fill="none" stroke="#c4c7c5" stroke-width="2" stroke-linejoin="round"/><path d="M14.6 5.2L16.6 3.2L20.1 6.7L18.1 8.7Z" fill="#c4c7c5"/><path d="M11.3 16.3H21.6V20.4H7.2Z" fill="#c4c7c5"/></svg>
<svg style="left:75px;top:415.0px" width="20" height="20" viewBox="0 0 24 24"><path d="M2.2 6a1.4 1.4 0 0 1 1.4-1.4H9.2L11.2 6.8H20.1a1.4 1.4 0 0 1 1.4 1.4V18.6a1.4 1.4 0 0 1-1.4 1.4H3.6a1.4 1.4 0 0 1-1.4-1.4Z" fill="none" stroke="#c4c7c5" stroke-width="2"/><path d="M2.5 4.8H9.5L11 6.8V8.4H2.5Z" fill="#c4c7c5"/><path d="M7.2 13.7H14.6M11.3 10.4L14.6 13.7L11.3 17" fill="none" stroke="#c4c7c5" stroke-width="2"/></svg>
<svg style="left:75px;top:451.8px" width="20" height="20" viewBox="0 0 24 24"><path d="M16.4 23.8H6.4L2.1 17.6L9.6 4.4H16.4L21.4 12.9" fill="none" stroke="#444746" stroke-width="2" stroke-linejoin="round"/><path d="M15.2 18.4H8.2L13.1 10.2L16.4 15.4" fill="none" stroke="#444746" stroke-width="2" stroke-linejoin="round"/><path d="M21.5 16V22.8M18.1 19.4H24.9" stroke="#444746" stroke-width="2.2"/></svg>
<svg style="left:75px;top:488.0px" width="20" height="20" viewBox="0 0 24 24"><rect x="3.6" y="5" width="16.7" height="2.2" fill="#c4c7c5"/><rect x="9.6" y="3.6" width="4.8" height="1.6" fill="#c4c7c5"/><path d="M5.9 7V20.4a1.4 1.4 0 0 0 1.4 1.4H16.5a1.4 1.4 0 0 0 1.4-1.4V7" fill="none" stroke="#c4c7c5" stroke-width="2"/><path d="M10.1 9.6V18.7M13.7 9.6V18.7" stroke="#c4c7c5" stroke-width="1.6"/></svg>
<svg style="left:75px;top:544.6px" width="20" height="20" viewBox="0 0 24 24"><path d="M3.9 14A8.4 8.4 0 1 1 6.3 18.4" fill="none" stroke="#c4c7c5" stroke-width="2"/><path d="M1.2 11.6L3.9 15.2L6.8 11.6" fill="none" stroke="#c4c7c5" stroke-width="2.1"/><path d="M12.2 7.6V12.8L15.6 15.8" fill="none" stroke="#c4c7c5" stroke-width="2"/></svg>
<svg style="left:75px;top:581.5px" width="20" height="20" viewBox="0 0 24 24"><circle cx="11.8" cy="12.2" r="9.9" fill="none" stroke="#444746" stroke-width="2"/><path d="M7.6 10.6L10.6 13.4L16.2 7.9" fill="none" stroke="#444746" stroke-width="2.1"/><path d="M8 16.9H15.6" stroke="#444746" stroke-width="2.1"/></svg>
<svg style="left:75px;top:637.7px" width="20" height="20" viewBox="0 0 24 24"><circle cx="11.8" cy="12.4" r="9.9" fill="none" stroke="#444746" stroke-width="2"/><rect x="10.7" y="7.1" width="2.3" height="1.8" fill="#444746"/><rect x="10.7" y="10.9" width="2.3" height="6.6" fill="#444746"/></svg>
<svg style="left:75px;top:674.1px" width="20" height="20" viewBox="0 0 24 24"><path d="M8.20 6.46 L10.06 5.71 L10.24 2.82 L13.36 2.82 L13.54 5.71 L15.40 6.46 L16.98 7.70 L19.57 6.41 L21.14 9.12 L18.72 10.72 L19.00 12.70 L18.72 14.68 L21.14 16.28 L19.57 18.99 L16.98 17.70 L15.40 18.94 L13.54 19.69 L13.36 22.58 L10.24 22.58 L10.06 19.69 L8.20 18.94 L6.62 17.70 L4.03 18.99 L2.46 16.28 L4.88 14.68 L4.60 12.70 L4.88 10.72 L2.46 9.12 L4.03 6.41 L6.62 7.70Z" fill="none" stroke="#c4c7c5" stroke-width="1.9" stroke-linejoin="round"/><circle cx="11.8" cy="12.7" r="3" fill="none" stroke="#c4c7c5" stroke-width="1.9"/></svg>
<svg style="left:75px;top:730.5px" width="20" height="20" viewBox="0 0 24 24"><path d="M5.8 3.2H17.8V9.5H5.8Z" fill="none" stroke="#444746" stroke-width="1.9"/><path d="M3.2 9.2H20.6a2 2 0 0 1 2 2V18H1.2V11.2a2 2 0 0 1 2-2Z" fill="#444746"/><path d="M5.8 14.8H17.8V21.2H5.8Z" fill="#fff" stroke="#444746" stroke-width="1.9"/><rect x="17.4" y="11.6" width="1.8" height="1.8" fill="#fff"/></svg>
</body></html>
